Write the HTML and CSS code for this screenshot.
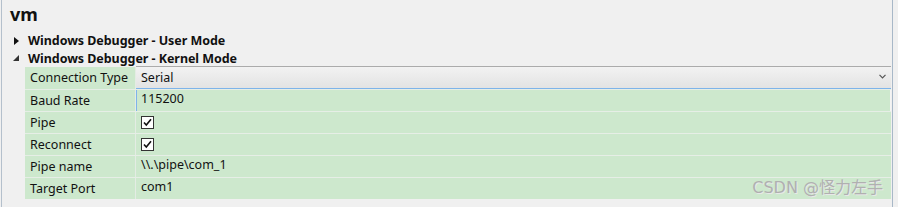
FILE: index.html
```html
<!DOCTYPE html>
<html lang="en">
<head>
    <meta charset="UTF-8">
    <title>vm</title>
    <link rel="stylesheet" href="styles.css">
</head>
<body>
    <div class="panel">
        <h1 class="title">vm</h1>
        <div class="group">
            <span class="arrow closed"></span>
            <span>Windows Debugger - User Mode</span>
        </div>
        <div class="group">
            <span class="arrow open"></span>
            <span>Windows Debugger - Kernel Mode</span>
        </div>
        <div class="props">
            <div class="row first">
                <div class="name">Connection Type</div>
                <div class="value combo">
                    <span>Serial</span>
                    <svg class="chev" width="7" height="5" viewBox="0 0 7 5"><path d="M0.5 0.8 L3.5 3.8 L6.5 0.8" fill="none" stroke="#555" stroke-width="1.2"/></svg>
                </div>
            </div>
            <div class="row">
                <div class="name">Baud Rate</div>
                <div class="value edit">115200</div>
            </div>
            <div class="row">
                <div class="name">Pipe</div>
                <div class="value"><span class="check"><svg width="11" height="11" viewBox="0 0 11 11"><path d="M2 5.5 L4.3 8 L9 2.2" fill="none" stroke="#111" stroke-width="1.6"/></svg></span></div>
            </div>
            <div class="row">
                <div class="name">Reconnect</div>
                <div class="value"><span class="check"><svg width="11" height="11" viewBox="0 0 11 11"><path d="M2 5.5 L4.3 8 L9 2.2" fill="none" stroke="#111" stroke-width="1.6"/></svg></span></div>
            </div>
            <div class="row">
                <div class="name">Pipe name</div>
                <div class="value up">\\.\pipe\com_1</div>
            </div>
            <div class="row">
                <div class="name">Target Port</div>
                <div class="value up">com1<span class="mark">CSDN @怪力左手</span></div>
            </div>
        </div>
    </div>
</body>
</html>
```
FILE: styles.css
```css
* {
    margin: 0;
    padding: 0;
    box-sizing: border-box;
}
body {
    background: #f0f0f0;
    font-family: 'Noto Sans', 'Noto Sans CJK SC', sans-serif;
    color: #111;
    width: 898px;
    height: 207px;
    overflow: hidden;
}
.panel {
    margin-left: 1px;
    width: 892px;
    height: 207px;
    border-left: 1px solid #b4c0cc;
    border-right: 1px solid #a8b8c8;
    padding-left: 8px;
}
.title {
    font-size: 18px;
    font-weight: bold;
    line-height: 22px;
    padding-top: 3px;
    height: 32px;
}
.group {
    display: flex;
    align-items: center;
    height: 17.5px;
    font-size: 12.5px;
    font-weight: bold;
    letter-spacing: -0.05px;
}
.arrow {
    width: 18px;
    height: 10px;
    position: relative;
}
.arrow.closed::before {
    content: '';
    position: absolute;
    left: 4px;
    top: 1px;
    border-left: 5px solid #111;
    border-top: 4px solid transparent;
    border-bottom: 4px solid transparent;
}
.arrow.open::before {
    content: '';
    position: absolute;
    left: 3px;
    top: 2px;
    border-right: 6px solid #333;
    border-top: 6px solid transparent;
}
.props {
    margin-left: 15px;
    width: 866px;
}
.row {
    display: flex;
    height: 22px;
    border-top: 1px solid #e6eee6;
}
.row.first {
    border-top: none;
    height: 22px;
}
.name {
    width: 111px;
    background: #cde8cd;
    border-right: 1px solid #e4ece4;
    font-size: 12.5px;
    line-height: 22px;
    padding-left: 5px;
    white-space: nowrap;
}
.value {
    flex: 1;
    background: #cde8cd;
    font-size: 12.5px;
    line-height: 21px;
    padding-left: 5px;
    position: relative;
}
.value.up {
    line-height: 18px;
}
.combo {
    background: linear-gradient(#f2f2f2, #e3e3e3);
    border-top: 1px solid #ababab;
    border-bottom: 1px solid #7eb4ea;
    margin-top: -1px;
    display: flex;
    justify-content: space-between;
    align-items: center;
    line-height: 20px;
    padding-right: 5px;
}
.edit {
    border-left: 1px solid #7eb4ea;
    border-right: 1px solid #f4f4f4;
    line-height: 17px;
    padding-left: 4px;
}
.chev {
    margin-top: -3px;
}
.check {
    display: inline-flex;
    align-items: center;
    justify-content: center;
    width: 13px;
    height: 13px;
    background: #fff;
    border: 1px solid #333;
    margin-top: 4px;
    vertical-align: top;
}
.mark {
    position: absolute;
    right: 8px;
    top: 0;
    font-size: 16px;
    line-height: 20px;
    color: #b0b0b0;
    text-shadow: 1px 1px 0 #e8e8e8;
    font-family: 'DejaVu Sans', 'Noto Sans CJK SC', sans-serif;
}
```
